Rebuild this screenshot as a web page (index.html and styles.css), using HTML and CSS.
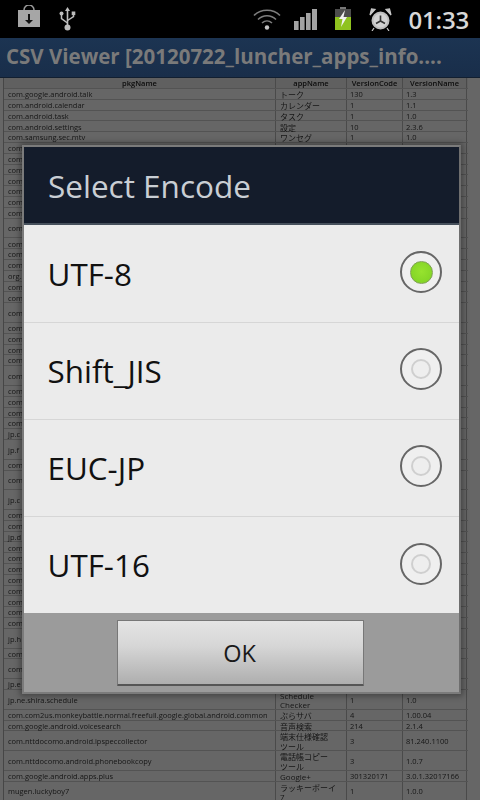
FILE: index.html
```html
<!DOCTYPE html>
<html lang="ja">
<head>
<meta charset="utf-8">
<title>CSV Viewer</title>
<link rel="stylesheet" href="styles.css">
</head>
<body>
<div class="screen">
  <header class="statusbar">
    <div class="status-left">
      <svg class="ic-dl" viewBox="0 0 22 24"><path d="M6 8V5a5 5 0 0 1 10 0v3" fill="none" stroke="#9a9a9a" stroke-width="1.5"/><rect y="5" x="0" width="22" height="17" fill="#a6a6a6"/><path d="M10 9h2v6h3l-4 4-4-4h3z" fill="#111"/></svg>
      <svg class="ic-usb" viewBox="0 0 17 25"><path d="M8.500 1 6 5h1.700v14h1.600V5H11z" fill="#bdbdbd"/><path d="M8.500 17 2.500 12.500V8.500M8.500 14.500 14.500 10.500V8" fill="none" stroke="#bdbdbd" stroke-width="1.500"/><circle cx="2.500" cy="7.500" r="2" fill="#bdbdbd"/><rect x="12.700" y="5.500" width="3.600" height="3.600" fill="#bdbdbd"/><circle cx="8.500" cy="21.500" r="3" fill="#bdbdbd"/></svg>
    </div>
    <div class="status-right">
      <svg class="ic-wifi" viewBox="0 0 28 22"><g fill="none" stroke="#7e7e7e" stroke-width="1.600"><path d="M1 7.500C8 .5 20 .5 27 7.500"/><path d="M5 11.500c5-5 13-5 18 0"/><path d="M9 15c3-2.700 7-2.700 10 0"/></g><circle cx="14" cy="19.500" r="2.200" fill="#c4c4c4"/></svg>
      <svg class="ic-signal" viewBox="0 0 23 22"><g fill="#a3a3a3"><rect x="0" y="13" width="4.600" height="9"/><rect x="6" y="9" width="4.600" height="13"/><rect x="12" y="5" width="4.600" height="17"/><rect x="18" y="1" width="5" height="21"/></g></svg>
      <svg class="ic-batt" viewBox="0 0 16 23"><rect x="5" y="0" width="6" height="2" fill="#777"/><rect x="0" y="2" width="16" height="21" fill="#4d4d4d"/><rect x="0" y="10" width="16" height="13" fill="#8fc31f"/><path d="M10 3 4 12h3.500L6 20l6-10H8.500z" fill="#f2f2f2"/></svg>
      <svg class="ic-alarm" viewBox="0 0 23 23"><circle cx="11.500" cy="12.500" r="8" fill="#d2d2d2" stroke="#bdbdbd" stroke-width="2"/><path d="M11.500 7.500v5.500l-4.500 2.500M11.500 13l4.500 2.500" fill="none" stroke="#333" stroke-width="1.600"/><path d="M1 7 6 1.500 2.500 1zM22 7 17 1.500 20.500 1zM5 20l-2 3M18 20l2 3" fill="#c8c8c8" stroke="#c8c8c8" stroke-width="1.200"/></svg>
      <span class="clock">01:33</span>
    </div>
  </header>
  <h1 class="titlebar">CSV Viewer [20120722_luncher_apps_info....</h1>
  <div class="sheet">
    <div class="row head"><span class="c1">pkgName</span><span class="c2">appName</span><span class="c3">VersionCode</span><span class="c4">VersionName</span></div>
    <div class="row"><span class="c1">com.google.android.talk</span><span class="c2">トーク</span><span class="c3">130</span><span class="c4">1.3</span></div>
    <div class="row"><span class="c1">com.android.calendar</span><span class="c2">カレンダー</span><span class="c3">1</span><span class="c4">1.1</span></div>
    <div class="row"><span class="c1">com.android.task</span><span class="c2">タスク</span><span class="c3">1</span><span class="c4">1.0</span></div>
    <div class="row"><span class="c1">com.android.settings</span><span class="c2">設定</span><span class="c3">10</span><span class="c4">2.3.6</span></div>
    <div class="row"><span class="c1">com.samsung.sec.mtv</span><span class="c2">ワンセグ</span><span class="c3">1</span><span class="c4">1.0</span></div>
    <div class="row"><span class="c1">com</span><span class="c2"></span><span class="c3"></span><span class="c4"></span></div>
    <div class="row"><span class="c1">com</span><span class="c2"></span><span class="c3"></span><span class="c4"></span></div>
    <div class="row"><span class="c1">com</span><span class="c2"></span><span class="c3"></span><span class="c4"></span></div>
    <div class="row"><span class="c1">com</span><span class="c2"></span><span class="c3"></span><span class="c4"></span></div>
    <div class="row"><span class="c1">com</span><span class="c2"></span><span class="c3"></span><span class="c4"></span></div>
    <div class="row"><span class="c1">com</span><span class="c2"></span><span class="c3"></span><span class="c4"></span></div>
    <div class="row"><span class="c1">com</span><span class="c2"></span><span class="c3"></span><span class="c4"></span></div>
    <div class="row tall"><span class="c1">com</span><span class="c2"></span><span class="c3"></span><span class="c4"></span></div>
    <div class="row"><span class="c1">com</span><span class="c2"></span><span class="c3"></span><span class="c4"></span></div>
    <div class="row"><span class="c1">com</span><span class="c2"></span><span class="c3"></span><span class="c4"></span></div>
    <div class="row"><span class="c1">com</span><span class="c2"></span><span class="c3"></span><span class="c4"></span></div>
    <div class="row"><span class="c1">org.</span><span class="c2"></span><span class="c3"></span><span class="c4"></span></div>
    <div class="row"><span class="c1">com</span><span class="c2"></span><span class="c3"></span><span class="c4"></span></div>
    <div class="row"><span class="c1">com</span><span class="c2"></span><span class="c3"></span><span class="c4"></span></div>
    <div class="row tall"><span class="c1">com</span><span class="c2"></span><span class="c3"></span><span class="c4"></span></div>
    <div class="row"><span class="c1">com</span><span class="c2"></span><span class="c3"></span><span class="c4"></span></div>
    <div class="row"><span class="c1">com</span><span class="c2"></span><span class="c3"></span><span class="c4"></span></div>
    <div class="row"><span class="c1">com</span><span class="c2"></span><span class="c3"></span><span class="c4"></span></div>
    <div class="row"><span class="c1">com</span><span class="c2"></span><span class="c3"></span><span class="c4"></span></div>
    <div class="row tall"><span class="c1">com</span><span class="c2"></span><span class="c3"></span><span class="c4"></span></div>
    <div class="row"><span class="c1">com</span><span class="c2"></span><span class="c3"></span><span class="c4"></span></div>
    <div class="row"><span class="c1">com</span><span class="c2"></span><span class="c3"></span><span class="c4"></span></div>
    <div class="row"><span class="c1">com</span><span class="c2"></span><span class="c3"></span><span class="c4"></span></div>
    <div class="row"><span class="c1">com</span><span class="c2"></span><span class="c3"></span><span class="c4"></span></div>
    <div class="row"><span class="c1">jp.c</span><span class="c2"></span><span class="c3"></span><span class="c4"></span></div>
    <div class="row tall"><span class="c1">jp.f</span><span class="c2"></span><span class="c3"></span><span class="c4"></span></div>
    <div class="row"><span class="c1">com</span><span class="c2"></span><span class="c3"></span><span class="c4"></span></div>
    <div class="row tall"><span class="c1">com</span><span class="c2"></span><span class="c3"></span><span class="c4"></span></div>
    <div class="row tall"><span class="c1">jp.c</span><span class="c2"></span><span class="c3"></span><span class="c4"></span></div>
    <div class="row"><span class="c1">com</span><span class="c2"></span><span class="c3"></span><span class="c4"></span></div>
    <div class="row"><span class="c1">com</span><span class="c2"></span><span class="c3"></span><span class="c4"></span></div>
    <div class="row"><span class="c1">jp.d</span><span class="c2"></span><span class="c3"></span><span class="c4"></span></div>
    <div class="row"><span class="c1">com</span><span class="c2"></span><span class="c3"></span><span class="c4"></span></div>
    <div class="row"><span class="c1">com</span><span class="c2"></span><span class="c3"></span><span class="c4"></span></div>
    <div class="row"><span class="c1">com</span><span class="c2"></span><span class="c3"></span><span class="c4"></span></div>
    <div class="row"><span class="c1">com</span><span class="c2"></span><span class="c3"></span><span class="c4"></span></div>
    <div class="row"><span class="c1">com</span><span class="c2"></span><span class="c3"></span><span class="c4"></span></div>
    <div class="row"><span class="c1">com</span><span class="c2"></span><span class="c3"></span><span class="c4"></span></div>
    <div class="row"><span class="c1">com</span><span class="c2"></span><span class="c3"></span><span class="c4"></span></div>
    <div class="row"><span class="c1">com</span><span class="c2"></span><span class="c3"></span><span class="c4"></span></div>
    <div class="row tall"><span class="c1">jp.h</span><span class="c2"></span><span class="c3"></span><span class="c4"></span></div>
    <div class="row"><span class="c1">com</span><span class="c2"></span><span class="c3"></span><span class="c4"></span></div>
    <div class="row tall"><span class="c1">com</span><span class="c2"></span><span class="c3"></span><span class="c4"></span></div>
    <div class="row"><span class="c1">jp.e</span><span class="c2"></span><span class="c3"></span><span class="c4"></span></div>
    <div class="row tall"><span class="c1">jp.ne.shira.schedule</span><span class="c2">Schedule<br>Checker</span><span class="c3">1</span><span class="c4">1.0</span></div>
    <div class="row"><span class="c1">com.com2us.monkeybattle.normal.freefull.google.global.android.common</span><span class="c2">ぶらサバ</span><span class="c3">4</span><span class="c4">1.00.04</span></div>
    <div class="row"><span class="c1">com.google.android.voicesearch</span><span class="c2">音声検索</span><span class="c3">214</span><span class="c4">2.1.4</span></div>
    <div class="row tall"><span class="c1">com.nttdocomo.android.ipspeccollector</span><span class="c2">端末仕様確認<br>ツール</span><span class="c3">3</span><span class="c4">81.240.1100</span></div>
    <div class="row tall"><span class="c1">com.nttdocomo.android.phonebookcopy</span><span class="c2">電話帳コピー<br>ツール</span><span class="c3">3</span><span class="c4">1.0.7</span></div>
    <div class="row"><span class="c1">com.google.android.apps.plus</span><span class="c2">Google+</span><span class="c3">301320171</span><span class="c4">3.0.1.32017166</span></div>
    <div class="row tall"><span class="c1">mugen.luckyboy7</span><span class="c2">ラッキーボーイ<br>7</span><span class="c3">1</span><span class="c4">1.0.0</span></div>
  </div>
  <div class="scrim"></div>
  <section class="dialog">
    <h2 class="dialog-title">Select Encode</h2>
    <ul class="options">
      <li class="option"><span>UTF-8</span><i class="radio on"></i></li>
      <li class="option"><span>Shift_JIS</span><i class="radio"></i></li>
      <li class="option"><span>EUC-JP</span><i class="radio"></i></li>
      <li class="option"><span>UTF-16</span><i class="radio"></i></li>
    </ul>
    <footer class="dialog-foot"><button class="ok">OK</button></footer>
  </section>
</div>
</body>
</html>
```
FILE: styles.css
```css
* { box-sizing: border-box; }
html, body { margin: 0; padding: 0; }
body { width: 480px; height: 800px; overflow: hidden; background: #fff; font-family: "Open Sans", "Noto Sans CJK JP", sans-serif; }
.screen { position: relative; width: 480px; height: 800px; overflow: hidden; display: flex; flex-direction: column; }

.statusbar { height: 38px; background: #000; display: flex; justify-content: space-between; align-items: flex-start; flex: none; position: relative; z-index: 3; }
.status-left { display: flex; padding: 5px 0 0 18px; gap: 19px; }
.ic-dl { width: 22px; height: 24px; }
.ic-usb { width: 17px; height: 25px; margin-top: 1px; }
.status-right { display: flex; padding: 8px 11px 0 0; align-items: flex-start; }
.ic-wifi { width: 28px; height: 22px; margin-right: 13px; }
.ic-signal { width: 23px; height: 22px; margin-right: 18px; }
.ic-batt { width: 16px; height: 23px; margin-right: 18px; margin-top: -1px; }
.ic-alarm { width: 23px; height: 23px; margin-right: 17px; }
.clock { color: #d8d8d8; font-size: 24px; line-height: 24px; font-weight: 600; letter-spacing: -.2px; }

.titlebar { position: relative; z-index: 2; margin: 0; height: 40px; flex: none; padding: 0 0 0 6px; background: linear-gradient(#1c3452, #192e4a); color: #7a7a7a; font-size: 20.500px; line-height: 37px; font-weight: 700; white-space: nowrap; overflow: hidden; border-bottom: 1px solid #121f30; }

.sheet { flex: none; margin-left: 3px; width: 465px; border-left: 1px solid #b0b0b0; filter: blur(.35px); }
.row { display: grid; grid-template-columns: 272px 70px 57px 64px; grid-template-rows: 100%; height: 10.800px; border-bottom: 1px solid #cfcfcf; background: #fff; color: #3a3a3a; font-size: 7.500px; line-height: 9.500px; }
.row.tall { height: 19.800px; }
.row span { display: flex; align-items: center; padding: 2px 0 0 3px; border-right: 1px solid #b8b8b8; white-space: nowrap; overflow: visible; }
.row .c1 { padding-left: 4px; }
.row .c2 { display: block; align-self: center; white-space: normal; border-right: 0; font-size: 8px; padding-left: 4px; }
.row .c3 { border-left: 1px solid #b8b8b8; }
.row.head { height: 11px; background: #efefef; font-weight: 600; color: #222; }
.row.head span { justify-content: center; padding-left: 0; }
.row.head .c2 { text-align: center; font-size: 7.500px; }

.scrim { position: absolute; inset: 78px 0 0 0; background: rgba(0, 0, 0, .6); z-index: 1; }

.dialog { position: absolute; z-index: 2; left: 22px; top: 145px; width: 439px; height: 549px; border: 2px solid #7b7b7b; border-right-color: #6e6e6e; display: flex; flex-direction: column; box-shadow: 0 0 6px 2px rgba(0, 0, 0, .35); background: #ebebeb; }
.dialog-title { margin: 0; height: 78px; flex: none; background: #141c2b; color: #c9ced4; font-size: 31.500px; font-weight: 400; line-height: 78px; padding-left: 24px; border-bottom: 2px solid #46505c; }
.options { list-style: none; margin: 0; padding: 1px 0 0; flex: none; height: 388px; overflow: hidden; }
.option { height: 97px; display: flex; align-items: center; justify-content: space-between; padding: 0 17px 0 23.500px; font-size: 31.400px; color: #111; border-bottom: 1px solid #d6d6d6; background: #ebebeb; }
.option:last-child { border-bottom: 0; }
.option span { position: relative; top: -1px; }
.radio { position: relative; top: -2px; width: 42px; height: 42px; border-radius: 50%; border: 2px solid #666; background: #efefef; display: flex; align-items: center; justify-content: center; }
.radio::after { content: ""; width: 16px; height: 16px; border-radius: 50%; border: 2px solid #cfcfcf; background: #eee; }
.radio.on::after { width: 21px; height: 21px; border: 1px solid #7f9f55; background: radial-gradient(circle at 50% 45%, #97e32e, #7dd024); }
.dialog-foot { flex: 1; background: #9b9b9b; display: flex; justify-content: center; padding: 7px 2px 0 0; }
.ok { width: 247px; height: 66px; border: 1px solid #777; border-bottom: 2px solid #555; border-radius: 1px; background: linear-gradient(#e4e4e4, #d6d6d6 40%, #aeaeae); color: #1a1a1a; font-family: inherit; font-size: 23.500px; padding: 1px 2px 0 0; }
```
